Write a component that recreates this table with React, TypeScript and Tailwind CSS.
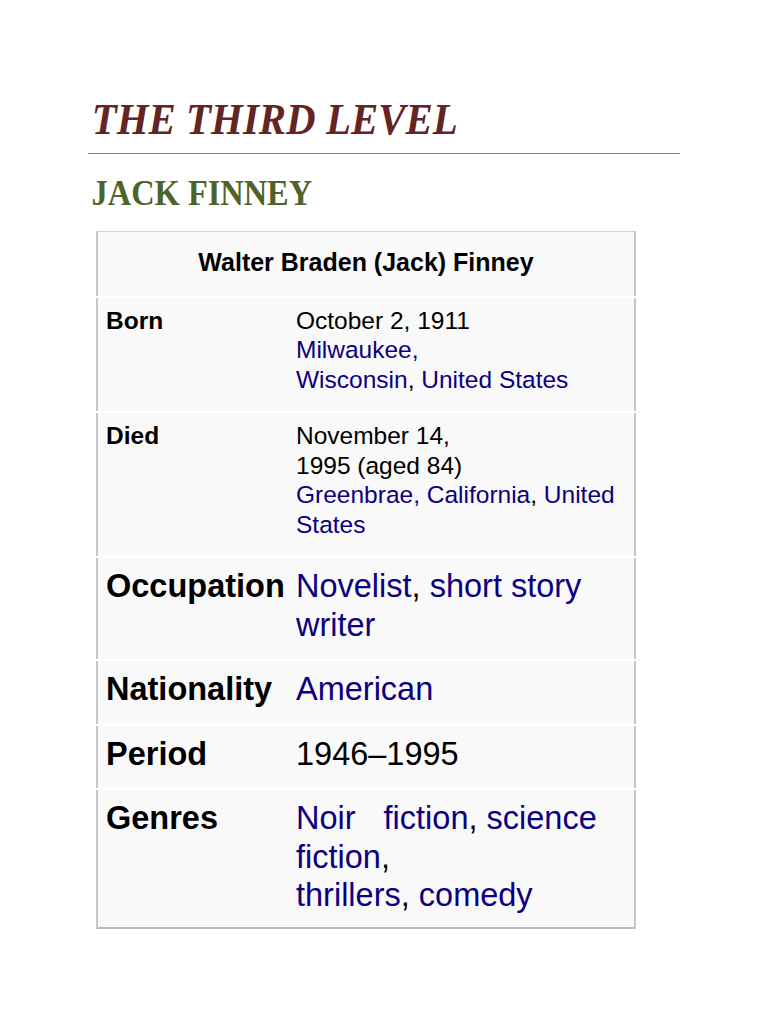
const sans = "font-['Liberation_Sans',Arial,sans-serif]"
const serif = "font-['Liberation_Serif','Times_New_Roman',serif]"

function Link({ children }: { children: React.ReactNode }) {
    return <span className="text-[#0b0080]">{children}</span>
}

type Row = {
    label: string
    big?: boolean
    value: React.ReactNode
}

const rows: Row[] = [
    {
        label: "Born",
        value: (
            <>
                October 2, 1911
                <br />
                <Link>Milwaukee,</Link>
                <br />
                <Link>Wisconsin</Link>, <Link>United States</Link>
            </>
        ),
    },
    {
        label: "Died",
        value: (
            <>
                November 14,
                <br />
                1995 (aged 84)
                <br />
                <Link>Greenbrae, California</Link>, <Link>United</Link>
                <br />
                <Link>States</Link>
            </>
        ),
    },
    {
        label: "Occupation",
        big: true,
        value: (
            <>
                <Link>Novelist</Link>, <Link>short story</Link>
                <br />
                <Link>writer</Link>
            </>
        ),
    },
    {
        label: "Nationality",
        big: true,
        value: <Link>American</Link>,
    },
    {
        label: "Period",
        big: true,
        value: <>1946–1995</>,
    },
    {
        label: "Genres",
        big: true,
        value: (
            <>
                <Link>Noir</Link>
                <span className="inline-block w-[28px]"></span>
                <Link>fiction</Link>, <Link>science</Link>
                <br />
                <Link>fiction</Link>,
                <br />
                <Link>thrillers</Link>, <Link>comedy</Link>
            </>
        ),
    },
]

export default function App() {
    return (
        <div className="min-h-screen w-full bg-white">
            <div className="pl-[88px] pt-[98px] w-[680px]">
                {/* heading */}
                <h1 className={`${serif} pl-[4px] text-[44px] leading-none font-bold italic text-[#632423] origin-left scale-x-[0.93] whitespace-nowrap`}>
                    THE THIRD LEVEL
                </h1>
                <div className="mt-[11px] h-px bg-[#5b8cc8]"></div>

                <h2 className={`${serif} mt-[21px] pl-[4px] text-[36px] leading-none font-bold text-[#4f6228] origin-left scale-x-[0.9] whitespace-nowrap`}>
                    JACK FINNEY
                </h2>

                {/* infobox */}
                <div className={`${sans} mt-[20px] ml-[8px] w-[540px] flex flex-col gap-[2px] bg-white text-black`}>
                    <div className="border-t border-x-2 border-t-[#d2d2d2] border-x-[#c8c8c8] bg-[#f9f9f9] pt-[16px] pb-[18px] text-center text-[25px] leading-[29.5px] font-bold">
                        Walter Braden (Jack) Finney
                    </div>
                    {rows.map((row, i) => (
                        <div
                            key={row.label}
                            className={`grid grid-cols-[190px_1fr] border-x-2 border-x-[#c8c8c8] bg-[#f9f9f9] pl-[8px] pr-[8px] ${
                                i === rows.length - 1 ? "border-b-2 border-b-[#bdbdbd] pb-[12px]" : row.big ? "pb-[15px]" : "pb-[17px]"
                            } ${row.big ? "pt-[9px] text-[32.5px] leading-[38.5px]" : "pt-[8px] text-[24.5px] leading-[29.5px]"}`}
                        >
                            <div className="font-bold whitespace-nowrap">{row.label}</div>
                            <div className="whitespace-nowrap">{row.value}</div>
                        </div>
                    ))}
                </div>
            </div>
        </div>
    )
}
